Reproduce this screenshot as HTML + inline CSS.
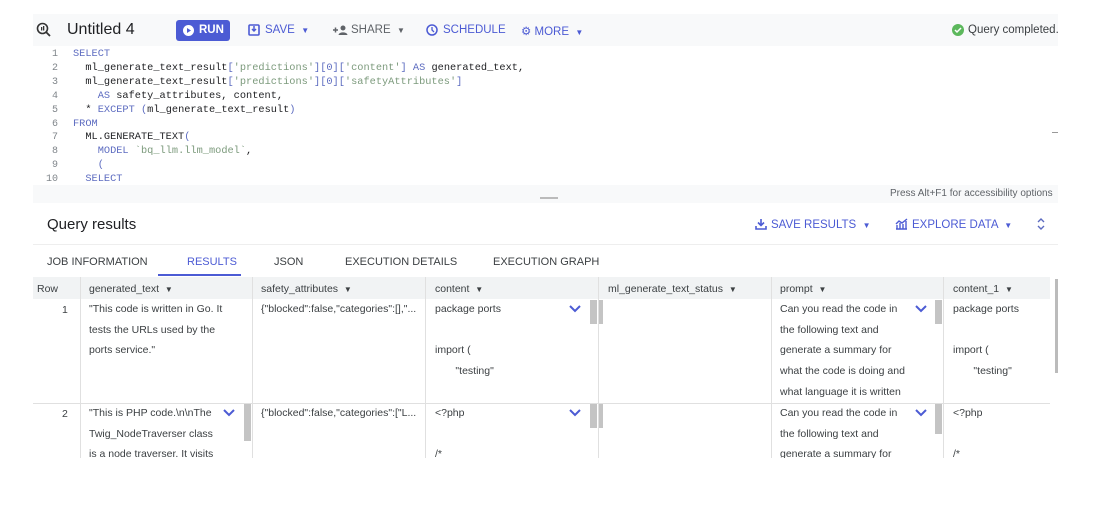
<!DOCTYPE html>
<html><head><meta charset="utf-8"><style>
*{box-sizing:border-box;margin:0;padding:0}
body{width:1100px;height:511px;background:#fff;font-family:"Liberation Sans",sans-serif;color:#3c4043;position:relative;overflow:hidden}
.a{position:absolute;white-space:nowrap}
.tb{left:33px;top:14px;width:1025px;height:32px;background:#f8f9fa}
.btn{font-size:11.5px;color:#4c5bd4;top:24px}
.code{font-family:"Liberation Mono",monospace;font-size:10.3px;color:#202124}
.ln{font-family:"Liberation Mono",monospace;font-size:10px;color:#80868b;width:26px;text-align:right;left:32px}
.k{color:#5c6bc0}.s{color:#7c9a7c}
.cell{font-size:10.5px;color:#3c4043}
.hd{font-size:10.5px;color:#3c4043;top:283px}
.vl{position:absolute;width:1px;background:#e0e0e0}
.sb{position:absolute;width:7px;background:#c4c4c4}
</style></head><body>
<div class="a tb"></div>
<svg class="a" style="left:36px;top:22px" width="15" height="15" viewBox="0 0 15 15"><circle cx="6.5" cy="6.5" r="5" fill="none" stroke="#333" stroke-width="1.6"/><line x1="10" y1="10" x2="14" y2="14" stroke="#333" stroke-width="1.8"/><rect x="5" y="5" width="1.3" height="3.5" fill="#333"/><rect x="7" y="4" width="1.3" height="4.5" fill="#333"/></svg>
<div class="a" style="left:67px;top:21px;font-size:16px;color:#202124">Untitled 4</div>
<div class="a" style="left:176px;top:20px;width:54px;height:21px;background:#4c5bd4;border-radius:3px"></div>
<svg class="a" style="left:183px;top:25px" width="11" height="11"><circle cx="5.5" cy="5.5" r="5.5" fill="#fff"/><path d="M4 3 L8 5.5 L4 8Z" fill="#4c5bd4"/></svg>
<div class="a btn" style="left:199px;color:#fff;font-weight:bold">RUN</div>
<svg class="a" style="left:248px;top:24px" width="12" height="12"><rect x="1" y="1" width="10" height="10" rx="1" fill="none" stroke="#4c5bd4" stroke-width="1.6"/><path d="M4 5 L6 7 L8 5" stroke="#4c5bd4" fill="none" stroke-width="1.5"/><line x1="6" y1="2" x2="6" y2="7" stroke="#4c5bd4" stroke-width="1.5"/></svg>
<div class="a btn" style="left:265px">SAVE &nbsp;<span style="font-size:8px">▼</span></div>
<svg class="a" style="left:333px;top:24px" width="15" height="12"><path d="M0 6 H5 M2.5 3.5 V8.5" stroke="#5f6368" stroke-width="1.5"/><circle cx="10" cy="4" r="2.5" fill="#5f6368"/><path d="M5.5 11 C6 7.5 14 7.5 14.5 11Z" fill="#5f6368"/></svg>
<div class="a btn" style="left:351px;color:#5f6368">SHARE &nbsp;<span style="font-size:8px">▼</span></div>
<svg class="a" style="left:426px;top:24px" width="12" height="12"><circle cx="6" cy="6" r="5" fill="none" stroke="#4c5bd4" stroke-width="1.5"/><path d="M6 3 V6 L8 8" stroke="#4c5bd4" fill="none" stroke-width="1.3"/></svg>
<div class="a btn" style="left:443px">SCHEDULE</div>
<div class="a btn" style="left:521px">⚙ MORE &nbsp;<span style="font-size:8px">▼</span></div>
<svg class="a" style="left:952px;top:24px" width="12" height="12"><circle cx="6" cy="6" r="6" fill="#5cb85c"/><path d="M3 6 L5 8 L9 4" stroke="#fff" fill="none" stroke-width="1.5"/></svg>
<div class="a" style="left:968px;top:24px;font-size:11.5px;color:#3c4043">Query completed.</div>

<div class="a ln" style="top:48px;line-height:13.9px;white-space:pre">1
2
3
4
5
6
7
8
9
10</div>
<div class="a code" style="left:73px;top:48px;line-height:13.9px;white-space:pre"><span class="k">SELECT</span>
  ml_generate_text_result<span class="k">[</span><span class="s">'predictions'</span><span class="k">][0][</span><span class="s">'content'</span><span class="k">]</span> <span class="k">AS</span> generated_text,
  ml_generate_text_result<span class="k">[</span><span class="s">'predictions'</span><span class="k">][0][</span><span class="s">'safetyAttributes'</span><span class="k">]</span>
    <span class="k">AS</span> safety_attributes, content,
  * <span class="k">EXCEPT</span> <span class="k">(</span>ml_generate_text_result<span class="k">)</span>
<span class="k">FROM</span>
  ML.GENERATE_TEXT<span class="k">(</span>
    <span class="k">MODEL</span> <span class="s">`bq_llm.llm_model`</span>,
    <span class="k">(</span>
  <span class="k">SELECT</span></div>
<div class="a" style="left:1052px;top:132px;width:6px;height:1px;background:#999"></div>
<div class="a" style="left:33px;top:185px;width:1025px;height:18px;background:#f8f9fa"></div>
<div class="a" style="left:540px;top:197px;width:18px;height:2px;background:#bbb"></div>
<div class="a" style="left:890px;top:188px;font-size:10px;color:#5f6368">Press Alt+F1 for accessibility options</div>

<div class="a" style="left:47px;top:216px;font-size:15px;color:#202124">Query results</div>
<div class="a" style="left:33px;top:244px;width:1025px;height:1px;background:#eee"></div>
<svg class="a" style="left:755px;top:218px" width="12" height="12"><path d="M6 1 V7 M3 4.5 L6 7.5 L9 4.5" stroke="#4c5bd4" stroke-width="1.6" fill="none"/><path d="M1 8 V11 H11 V8" stroke="#4c5bd4" stroke-width="1.6" fill="none"/></svg>
<div class="a btn" style="left:771px;top:219px">SAVE RESULTS &nbsp;<span style="font-size:8px">▼</span></div>
<svg class="a" style="left:895px;top:218px" width="13" height="12"><path d="M1 11 H12 M2 11 V7 M5 11 V5 M8 11 V6 M11 11 V3 M1 6 L4 3 L7 5 L12 1" stroke="#4c5bd4" stroke-width="1.4" fill="none"/></svg>
<div class="a btn" style="left:912px;top:219px">EXPLORE DATA &nbsp;<span style="font-size:8px">▼</span></div>
<svg class="a" style="left:1036px;top:217px" width="10" height="14"><path d="M2 5 L5 2 L8 5 M2 9 L5 12 L8 9" stroke="#5c6bc0" stroke-width="1.4" fill="none"/></svg>

<div class="a" style="left:47px;top:256px;font-size:11px;color:#3c4043">JOB INFORMATION</div>
<div class="a" style="left:187px;top:256px;font-size:11px;color:#4c5bd4">RESULTS</div>
<div class="a" style="left:158px;top:274px;width:83px;height:2px;background:#4c5bd4"></div>
<div class="a" style="left:274px;top:256px;font-size:11px">JSON</div>
<div class="a" style="left:345px;top:256px;font-size:11px">EXECUTION DETAILS</div>
<div class="a" style="left:493px;top:256px;font-size:11px">EXECUTION GRAPH</div>

<div class="a" style="left:33px;top:277px;width:1017px;height:22px;background:#f1f3f4"></div>
<div class="a hd" style="left:37px">Row</div>
<div class="a hd" style="left:89px">generated_text &nbsp;<span style="font-size:8px">▼</span></div>
<div class="a hd" style="left:261px">safety_attributes &nbsp;<span style="font-size:8px">▼</span></div>
<div class="a hd" style="left:435px">content &nbsp;<span style="font-size:8px">▼</span></div>
<div class="a hd" style="left:608px">ml_generate_text_status &nbsp;<span style="font-size:8px">▼</span></div>
<div class="a hd" style="left:780px">prompt &nbsp;<span style="font-size:8px">▼</span></div>
<div class="a hd" style="left:953px">content_1 &nbsp;<span style="font-size:8px">▼</span></div>

<div class="vl" style="left:80px;top:277px;height:181px"></div>
<div class="vl" style="left:252px;top:277px;height:181px"></div>
<div class="vl" style="left:425px;top:277px;height:181px"></div>
<div class="vl" style="left:598px;top:277px;height:181px"></div>
<div class="vl" style="left:771px;top:277px;height:181px"></div>
<div class="vl" style="left:943px;top:277px;height:181px"></div>
<div class="a" style="left:33px;top:403px;width:1017px;height:1px;background:#e0e0e0"></div>
<div class="a" style="left:1055px;top:279px;width:3px;height:94px;background:#bbb"></div>

<svg width="0" height="0" style="position:absolute"><defs><path id="cv" d="M1 1 L6 6 L11 1" stroke="#4c5bd4" stroke-width="2" fill="none"/></defs></svg>

<div class="a cell" style="left:62px;top:304px">1</div>
<div class="a cell" style="left:62px;top:408px">2</div>
<div class="a cell" style="left:89px;top:299px;line-height:20.7px">"This code is written in Go. It<br>tests the URLs used by the<br>ports service."</div>
<div class="a cell" style="left:261px;top:303px">{"blocked":false,"categories":[],"...</div>
<div class="a cell" style="left:435px;top:299px;line-height:20.7px">package ports<br><br>import (<br>&nbsp;&nbsp;&nbsp;&nbsp;&nbsp;&nbsp;&nbsp;"testing"</div>
<svg class="a" style="left:569px;top:305px" width="12" height="8"><use href="#cv"/></svg><div class="sb" style="left:590px;top:300px;height:24px"></div>
<div class="sb" style="left:599px;top:300px;height:24px;width:4px"></div>
<div class="a cell" style="left:780px;top:299px;line-height:20.7px">Can you read the code in<br>the following text and<br>generate a summary for<br>what the code is doing and<br>what language it is written</div>
<svg class="a" style="left:915px;top:305px" width="12" height="8"><use href="#cv"/></svg><div class="sb" style="left:935px;top:300px;height:24px"></div>
<div class="a cell" style="left:953px;top:299px;line-height:20.7px">package ports<br><br>import (<br>&nbsp;&nbsp;&nbsp;&nbsp;&nbsp;&nbsp;&nbsp;"testing"</div>

<div class="a cell" style="left:89px;top:403px;line-height:20.7px;height:55px;overflow:hidden">"This is PHP code.\n\nThe<br>Twig_NodeTraverser class<br>is a node traverser. It visits</div>
<svg class="a" style="left:223px;top:409px" width="12" height="8"><use href="#cv"/></svg><div class="sb" style="left:244px;top:404px;height:37px"></div>
<div class="a cell" style="left:261px;top:407px">{"blocked":false,"categories":["L...</div>
<div class="a cell" style="left:435px;top:403px;line-height:20.7px;height:55px;overflow:hidden">&lt;?php<br><br>/*</div>
<svg class="a" style="left:569px;top:409px" width="12" height="8"><use href="#cv"/></svg><div class="sb" style="left:590px;top:404px;height:24px"></div>
<div class="sb" style="left:599px;top:404px;height:24px;width:4px"></div>
<div class="a cell" style="left:780px;top:403px;line-height:20.7px;height:55px;overflow:hidden">Can you read the code in<br>the following text and<br>generate a summary for</div>
<svg class="a" style="left:915px;top:409px" width="12" height="8"><use href="#cv"/></svg><div class="sb" style="left:935px;top:404px;height:30px"></div>
<div class="a cell" style="left:953px;top:403px;line-height:20.7px;height:55px;overflow:hidden">&lt;?php<br><br>/*</div>
<div class="a" style="left:0;top:458px;width:1100px;height:53px;background:#fff"></div>
</body></html>
